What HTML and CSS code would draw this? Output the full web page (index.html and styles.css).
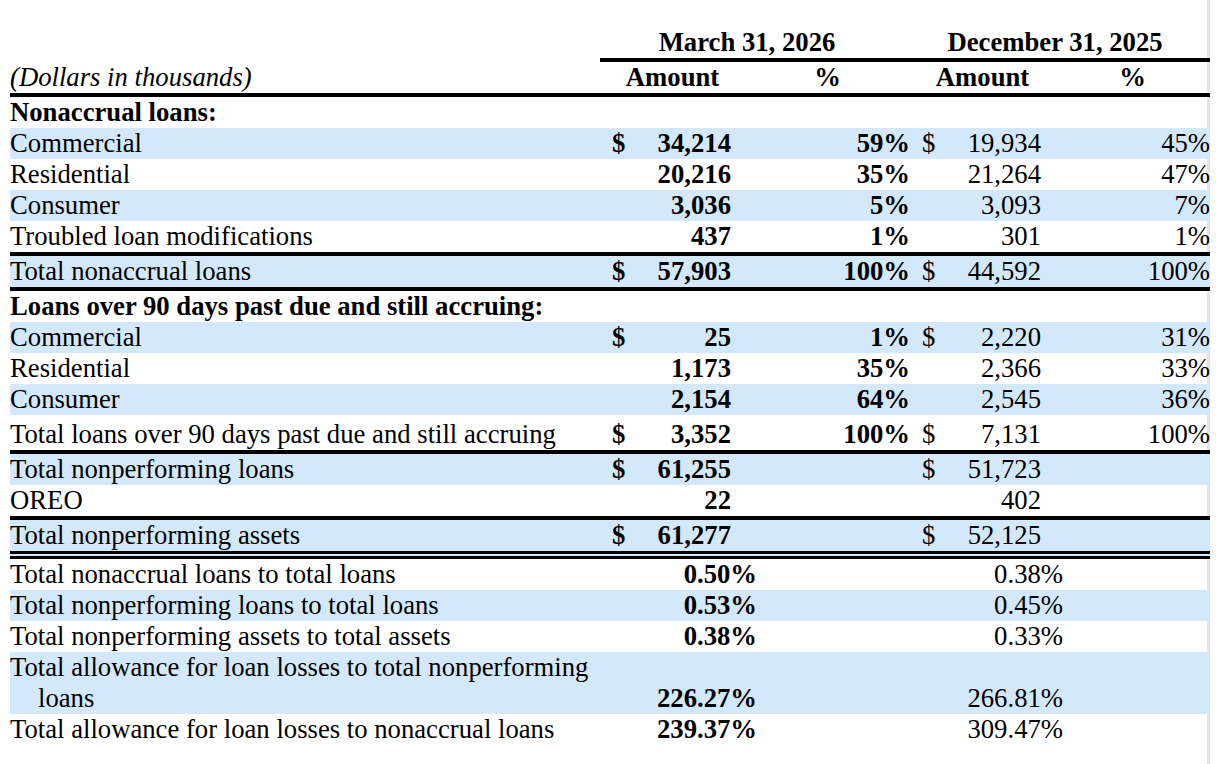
FILE: index.html
```html
<!DOCTYPE html>
<html lang="en">
<head>
	<meta charset="UTF-8">
	<title>Nonperforming assets</title>
	<link rel="stylesheet" href="styles.css">
</head>
<body>
	<div class="sheet">
		<table class="npa">
			<colgroup>
				<col class="w-label">
				<col class="w-cur">
				<col class="w-amt">
				<col class="w-pct">
				<col class="w-cur">
				<col class="w-amt">
				<col class="w-pct2">
			</colgroup>
			<thead>
				<tr class="period">
					<th class="label"></th>
					<th colspan="3" class="span">March 31, 2026</th>
					<th colspan="3" class="span">December 31, 2025</th>
				</tr>
				<tr class="cols">
					<th class="label unit">(Dollars in thousands)</th>
					<th colspan="2">Amount</th>
					<th>%</th>
					<th colspan="2">Amount</th>
					<th>%</th>
				</tr>
			</thead>
			<tbody>
				<tr class="head">
					<td class="label">Nonaccrual loans:</td>
					<td></td><td></td><td></td><td></td><td></td><td></td>
				</tr>
				<tr class="blue">
					<td class="label">Commercial</td>
					<td class="cur b">$</td><td class="amt b">34,214</td><td class="pct b">59%</td>
					<td class="cur">$</td><td class="amt">19,934</td><td class="pct">45%</td>
				</tr>
				<tr>
					<td class="label">Residential</td>
					<td class="cur"></td><td class="amt b">20,216</td><td class="pct b">35%</td>
					<td class="cur"></td><td class="amt">21,264</td><td class="pct">47%</td>
				</tr>
				<tr class="blue">
					<td class="label">Consumer</td>
					<td class="cur"></td><td class="amt b">3,036</td><td class="pct b">5%</td>
					<td class="cur"></td><td class="amt">3,093</td><td class="pct">7%</td>
				</tr>
				<tr>
					<td class="label">Troubled loan modifications</td>
					<td class="cur"></td><td class="amt b">437</td><td class="pct b">1%</td>
					<td class="cur"></td><td class="amt">301</td><td class="pct">1%</td>
				</tr>
				<tr class="blue total">
					<td class="label">Total nonaccrual loans</td>
					<td class="cur b">$</td><td class="amt b">57,903</td><td class="pct b">100%</td>
					<td class="cur">$</td><td class="amt">44,592</td><td class="pct">100%</td>
				</tr>
				<tr class="head">
					<td class="label">Loans over 90 days past due and still accruing:</td>
					<td></td><td></td><td></td><td></td><td></td><td></td>
				</tr>
				<tr class="blue">
					<td class="label">Commercial</td>
					<td class="cur b">$</td><td class="amt b">25</td><td class="pct b">1%</td>
					<td class="cur">$</td><td class="amt">2,220</td><td class="pct">31%</td>
				</tr>
				<tr>
					<td class="label">Residential</td>
					<td class="cur"></td><td class="amt b">1,173</td><td class="pct b">35%</td>
					<td class="cur"></td><td class="amt">2,366</td><td class="pct">33%</td>
				</tr>
				<tr class="blue">
					<td class="label">Consumer</td>
					<td class="cur"></td><td class="amt b">2,154</td><td class="pct b">64%</td>
					<td class="cur"></td><td class="amt">2,545</td><td class="pct">36%</td>
				</tr>
				<tr class="subtotal">
					<td class="label">Total loans over 90 days past due and still accruing</td>
					<td class="cur b">$</td><td class="amt b">3,352</td><td class="pct b">100%</td>
					<td class="cur">$</td><td class="amt">7,131</td><td class="pct">100%</td>
				</tr>
				<tr class="blue">
					<td class="label">Total nonperforming loans</td>
					<td class="cur b">$</td><td class="amt b">61,255</td><td class="pct"></td>
					<td class="cur">$</td><td class="amt">51,723</td><td class="pct"></td>
				</tr>
				<tr>
					<td class="label">OREO</td>
					<td class="cur"></td><td class="amt b">22</td><td class="pct"></td>
					<td class="cur"></td><td class="amt">402</td><td class="pct"></td>
				</tr>
				<tr class="blue grand">
					<td class="label">Total nonperforming assets</td>
					<td class="cur b">$</td><td class="amt b">61,277</td><td class="pct"></td>
					<td class="cur">$</td><td class="amt">52,125</td><td class="pct"></td>
				</tr>
				<tr>
					<td class="label">Total nonaccrual loans to total loans</td>
					<td colspan="3" class="ratio b">0.50%</td>
					<td colspan="3" class="ratio2">0.38%</td>
				</tr>
				<tr class="blue">
					<td class="label">Total nonperforming loans to total loans</td>
					<td colspan="3" class="ratio b">0.53%</td>
					<td colspan="3" class="ratio2">0.45%</td>
				</tr>
				<tr>
					<td class="label">Total nonperforming assets to total assets</td>
					<td colspan="3" class="ratio b">0.38%</td>
					<td colspan="3" class="ratio2">0.33%</td>
				</tr>
				<tr class="blue">
					<td class="label wrap">Total allowance for loan losses to total nonperforming loans</td>
					<td colspan="3" class="ratio b">226.27%</td>
					<td colspan="3" class="ratio2">266.81%</td>
				</tr>
				<tr>
					<td class="label">Total allowance for loan losses to nonaccrual loans</td>
					<td colspan="3" class="ratio b">239.37%</td>
					<td colspan="3" class="ratio2">309.47%</td>
				</tr>
			</tbody>
		</table>
	</div>
</body>
</html>
```

FILE: styles.css
```css
html,body{
	margin:0;
	padding:0;
	background:#fff;
}
.sheet{
	width:1200px;
	min-height:764px;
	margin-left:10px;
	padding-top:27px;
	box-sizing:border-box;
	border-right:3px solid #e4e4e4;
}
.npa{
	width:1200px;
	table-layout:fixed;
	border-collapse:separate;
	border-spacing:0;
	font-family:"Liberation Serif","Times New Roman",serif;
	font-size:26.7px;
	line-height:31px;
	color:#000;
}
.w-label{ width:590px; }
.w-cur{ width:40px; }
.w-amt{ width:105px; }
.w-pct{ width:165px; }
.w-pct2{ width:155px; }

.npa th,
.npa td{
	padding:0;
	white-space:nowrap;
	vertical-align:bottom;
}
.npa th{
	font-weight:bold;
	text-align:center;
}
.period .span{
	border-bottom:4px solid #000;
}
.period .span:nth-child(2){
	padding-right:16px;
}
.period .span:nth-child(3){
	padding-right:10px;
}
.cols th{
	border-bottom:4px solid #000;
}
.npa .label{
	text-align:left;
}
.npa .unit{
	font-style:italic;
	font-weight:normal;
}
.head .label{
	font-weight:bold;
}
.wrap{
	white-space:normal !important;
	padding-left:28px !important;
	text-indent:-28px;
}
.blue td{
	background:#d3e8fa;
}
.b{
	font-weight:bold;
}
.cur{
	text-align:left;
	padding-left:12px !important;
}
.amt{
	text-align:right;
	padding-right:14px !important;
}
.pct{
	text-align:right;
}
.ratio{
	text-align:right;
	padding-right:153px !important;
}
.ratio2{
	text-align:right;
	padding-right:147px !important;
}
.total td{
	border-top:4px solid #000;
	border-bottom:4px solid #000;
}
.subtotal td{
	border-top:4px solid transparent;
	border-bottom:4px solid #000;
}
.grand td{
	border-top:4px solid #000;
	border-bottom:8px double #000;
}
```
